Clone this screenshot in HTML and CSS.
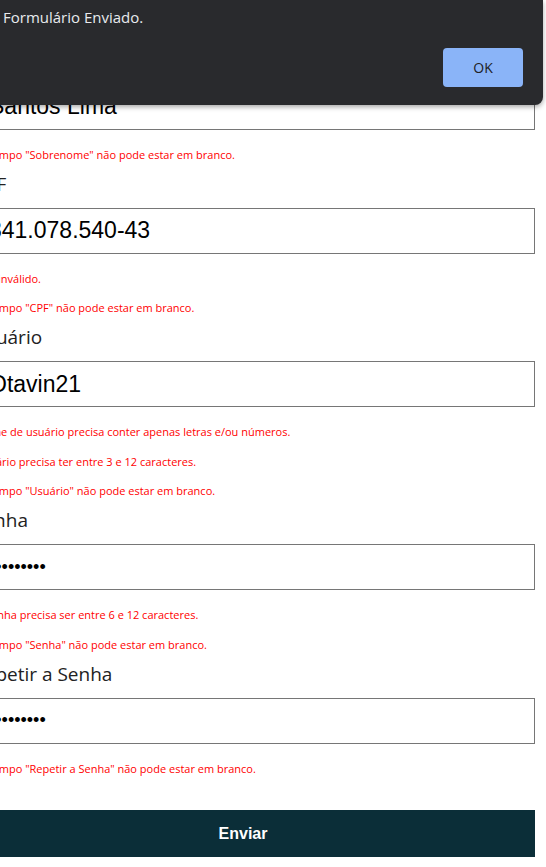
FILE: index.html
```html
<!DOCTYPE html>
<html lang="pt-BR">
<head>
  <meta charset="UTF-8">
  <meta name="viewport" content="width=device-width, initial-scale=1.0">
  <title>Cadastro</title>
  <link rel="stylesheet" href="styles.css">
</head>
<body>
<form class="form" onsubmit="return false;">
  <div class="field">
    <label for="sobrenome">Sobrenome</label>
    <input class="input" id="sobrenome" type="text" value="Santos Lima">
    <div class="errors">
      <p class="error">O campo "Sobrenome" não pode estar em branco.</p>
    </div>
  </div>
  <div class="field">
    <label for="cpf">CPF</label>
    <input class="input" id="cpf" type="text" value="341.078.540-43">
    <div class="errors">
      <p class="error">CPF inválido.</p>
      <p class="error">O campo "CPF" não pode estar em branco.</p>
    </div>
  </div>
  <div class="field">
    <label for="usuario">Usuário</label>
    <input class="input" id="usuario" type="text" value="Otavin21">
    <div class="errors">
      <p class="error">Nome de usuário precisa conter apenas letras e/ou números.</p>
      <p class="error">Usuário precisa ter entre 3 e 12 caracteres.</p>
      <p class="error">O campo "Usuário" não pode estar em branco.</p>
    </div>
  </div>
  <div class="field">
    <label for="senha">Senha</label>
    <input class="input input-password" id="senha" type="password" value="123456789">
    <div class="errors">
      <p class="error">A senha precisa ser entre 6 e 12 caracteres.</p>
      <p class="error">O campo "Senha" não pode estar em branco.</p>
    </div>
  </div>
  <div class="field">
    <label for="senha2">Repetir a Senha</label>
    <input class="input input-password" id="senha2" type="password" value="123456789">
    <div class="errors">
      <p class="error">O campo "Repetir a Senha" não pode estar em branco.</p>
    </div>
  </div>
  <button class="submit" type="submit">Enviar</button>
</form>

<div class="dialog">
  <div class="dialog-text">Formulário Enviado.</div>
  <div class="dialog-actions">
    <button class="dialog-ok" type="button">OK</button>
  </div>
</div>
</body>
</html>
```

FILE: styles.css
```css
body {
  font-family: "Open Sans", "Noto Sans", sans-serif;
  margin: 0;
  padding: 0;
  background-color: white;
  overflow: hidden;
}
.form {
  display: flex;
  flex-direction: column;
  margin-left: -27px;
  width: 562px;
  padding-top: 47.5px;
}
.field {
  display: flex;
  flex-direction: column;
  margin-bottom: 10px;
}
.field label {
  font-size: 19px;
  line-height: 24px;
  color: #222;
  margin-bottom: 12px;
}
.input {
  box-sizing: border-box;
  height: 46px;
  width: 100%;
  border: 1px solid #767676;
  padding: 0 15px;
  font-family: "Liberation Sans", Arial, sans-serif;
  font-size: 23px;
  color: black;
  background-color: white;
  outline: none;
}
.input-password {
  font-size: 18px;
}
.errors {
  display: flex;
  flex-direction: column;
  gap: 14.5px;
  padding-top: 17px;
  padding-left: 3px;
}
.error {
  margin: 0;
  font-size: 11px;
  line-height: 15px;
  color: #ff0000;
  white-space: nowrap;
}
.submit {
  margin-top: 24.5px;
  margin-left: -22px;
  width: calc(100% + 22px);
  height: 47px;
  border: none;
  background-color: #0b2e38;
  color: white;
  font-family: "Liberation Sans", Arial, sans-serif;
  font-size: 16px;
  font-weight: bold;
  cursor: pointer;
}
.dialog {
  position: absolute;
  top: 0;
  left: -200px;
  width: 743px;
  height: 105px;
  box-sizing: border-box;
  padding: 6px 20px 0 203px;
  background-color: #292a2d;
  border-radius: 0 0 8px 0;
  box-shadow: 0 2px 5px rgba(0, 0, 0, 0.35);
}
.dialog-text {
  color: #e8eaed;
  font-size: 15px;
  line-height: 22px;
}
.dialog-actions {
  display: flex;
  justify-content: flex-end;
  margin-top: 20px;
}
.dialog-ok {
  width: 80px;
  height: 39px;
  border: none;
  border-radius: 4px;
  background-color: #8ab4f8;
  color: #202124;
  font-family: "Open Sans", "Noto Sans", sans-serif;
  font-size: 14px;
  cursor: pointer;
}
```
